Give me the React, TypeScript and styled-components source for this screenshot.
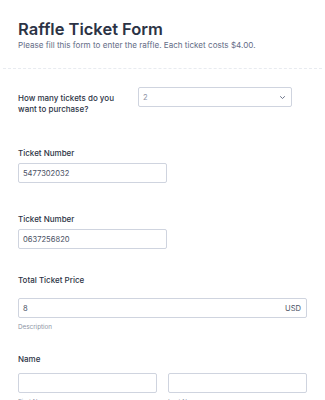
import React from "react";
import styled, { createGlobalStyle } from "styled-components";

const Global = createGlobalStyle`
  html, body { margin: 0; padding: 0; background: #fff; }
  body { font-family: Inter, "Noto Sans", Arial, sans-serif; color: #2c3345; }
  * { box-sizing: border-box; }
`;

const Page = styled.div`
  width: 325px;
  display: flex;
  flex-direction: column;
`;

const Header = styled.header`
  margin: 0 3px;
  padding: 19px 15px 18px;
  border-bottom: 1px dashed #e8ebf0;
`;

const Title = styled.h1`
  margin: 0;
  font-size: 16.5px;
  line-height: 20px;
  font-weight: 600;
  color: #2c3345;
`;

const Subtitle = styled.p`
  margin: 1px 0 0;
  font-size: 8.1px;
  line-height: 10px;
  color: #646c86;
`;

const Fields = styled.div`
  display: flex;
  flex-direction: column;
  padding: 0 18px;
`;

const Row = styled.div<{ $top: number }>`
  margin-top: ${(p) => p.$top}px;
`;

const InlineRow = styled.div<{ $top: number }>`
  margin-top: ${(p) => p.$top}px;
  display: grid;
  grid-template-columns: 120px 154px;
  align-items: start;
`;

const Label = styled.label`
  display: block;
  font-size: 8px;
  line-height: 11px;
  font-weight: 500;
  color: #2c3345;
`;

const InlineLabel = styled(Label)`
  padding-top: 6px;
`;

const Box = styled.div<{ $w?: string }>`
  width: ${(p) => p.$w || "100%"};
  height: 20px;
  border: 1px solid #cfd4df;
  border-radius: 2px;
  background: #fff;
  display: flex;
  align-items: center;
  padding: 0 5px 0 4px;
  font-size: 7.6px;
  color: #4a5164;
`;

const Value = styled.span`
  flex: 1;
`;

const SelectValue = styled.span`
  flex: 1;
  color: #8d93a5;
`;

const Unit = styled.span`
  color: #4a5164;
`;

const Sub = styled.div`
  margin-top: 5px;
  font-size: 6.3px;
  line-height: 8px;
  color: #8d93a5;
`;

const FieldGap = styled.div<{ $h: number }>`
  height: ${(p) => p.$h}px;
`;

const NameGrid = styled.div`
  display: grid;
  grid-template-columns: 1fr 1fr;
  column-gap: 11px;
`;

const Chevron = () => (
  <svg width="7" height="5" viewBox="0 0 7 5">
    <path d="M1.2 1.3 L3.5 3.5 L5.8 1.3" fill="none" stroke="#6b7389" strokeWidth="1" />
  </svg>
);

export default function App() {
  return (
    <Page>
      <Global />
      <Header>
        <Title>Raffle Ticket Form</Title>
        <Subtitle>Please fill this form to enter the raffle. Each ticket costs $4.00.</Subtitle>
      </Header>
      <Fields>
        <InlineRow $top={18}>
          <InlineLabel>
            How many tickets do you
            <br />
            want to purchase?
          </InlineLabel>
          <Box>
            <SelectValue>2</SelectValue>
            <Chevron />
          </Box>
        </InlineRow>

        <Row $top={33}>
          <Label>Ticket Number</Label>
          <FieldGap $h={4} />
          <Box $w="149px">
            <Value>5477302032</Value>
          </Box>
        </Row>

        <Row $top={31}>
          <Label>Ticket Number</Label>
          <FieldGap $h={4} />
          <Box $w="149px">
            <Value>0637256820</Value>
          </Box>
        </Row>

        <Row $top={26}>
          <Label>Total Ticket Price</Label>
          <FieldGap $h={12} />
          <Box>
            <Value>8</Value>
            <Unit>USD</Unit>
          </Box>
          <Sub>Description</Sub>
        </Row>

        <Row $top={23}>
          <Label>Name</Label>
          <FieldGap $h={8} />
          <NameGrid>
            <div>
              <Box />
              <Sub>First Name</Sub>
            </div>
            <div>
              <Box />
              <Sub>Last Name</Sub>
            </div>
          </NameGrid>
        </Row>
      </Fields>
    </Page>
  );
}
